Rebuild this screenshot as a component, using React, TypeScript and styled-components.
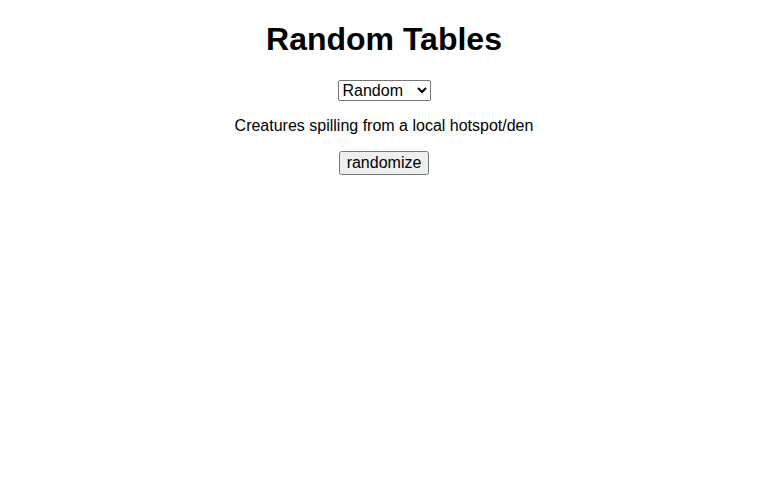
import React, { useState } from 'react';
import styled, { createGlobalStyle } from 'styled-components';

const GlobalStyle = createGlobalStyle`
  body {
    margin: 0;
    background: #fff;
    color: #000;
    font-family: "Liberation Sans", Arial, sans-serif;
  }
`;

const Page = styled.div`
  text-align: center;
  padding: 0 8px;
`;

const Title = styled.h1`
  font-size: 32px;
  font-weight: bold;
  margin: 21.44px 0;
`;

const TableSelect = styled.select`
  font-family: "Liberation Sans", Arial, sans-serif;
  font-size: 16px;
  color: #000;
`;

const Result = styled.p`
  font-size: 16px;
  margin: 16px 0;
`;

const RandomizeButton = styled.button`
  font-family: "Liberation Sans", Arial, sans-serif;
  font-size: 16px;
  color: #000;
`;

const tables: Record<string, string[]> = {
  creatures: [
    'Creatures spilling from a local hotspot/den',
    'A lone beast stalking the road',
    'Tracks leading into the woods',
  ],
  weather: ['Sudden fog rolls in', 'A storm on the horizon', 'Clear skies'],
};

const allEntries = Object.values(tables).flat();

const App: React.FC = () => {
  const [table, setTable] = useState('random');
  const [result, setResult] = useState(allEntries[0]);

  const randomize = () => {
    const pool = table === 'random' ? allEntries : tables[table];
    setResult(pool[Math.floor(Math.random() * pool.length)]);
  };

  return (
    <Page>
      <GlobalStyle />
      <Title>Random Tables</Title>
      <TableSelect value={table} onChange={(e) => setTable(e.target.value)}>
        <option value="random">Random</option>
        <option value="creatures">Creatures</option>
        <option value="weather">Weather</option>
      </TableSelect>
      <Result>{result}</Result>
      <RandomizeButton onClick={randomize}>randomize</RandomizeButton>
    </Page>
  );
};

export default App;
